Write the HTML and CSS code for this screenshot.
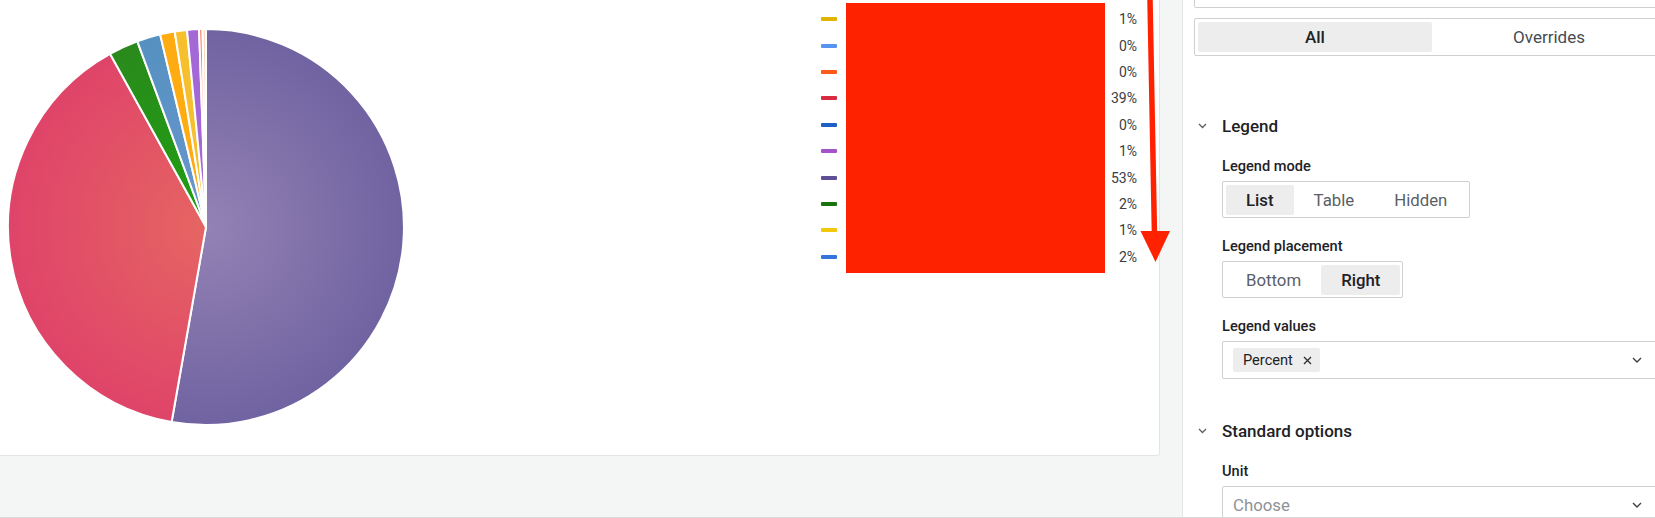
FILE: index.html
```html
<!DOCTYPE html>
<html>
<head>
<meta charset="utf-8">
<link rel="stylesheet" href="styles.css">
</head>
<body>
<div class="screen">
  <div class="main">
    <div class="panel">
      <svg class="pie" viewBox="0 0 420 455" xmlns="http://www.w3.org/2000/svg">
        <defs>
          <radialGradient id="gPurple" gradientUnits="userSpaceOnUse" cx="206" cy="227" r="198">
            <stop offset="0" stop-color="#9382b4"/><stop offset="1" stop-color="#7063a1"/>
          </radialGradient>
          <radialGradient id="gRed" gradientUnits="userSpaceOnUse" cx="206" cy="227" r="198">
            <stop offset="0" stop-color="#e66562"/><stop offset="1" stop-color="#df4469"/>
          </radialGradient>
          <radialGradient id="gGreen" gradientUnits="userSpaceOnUse" cx="206" cy="227" r="198">
            <stop offset="0" stop-color="#1fa011"/><stop offset="1" stop-color="#2a8a1c"/>
          </radialGradient>
          <radialGradient id="gBlue" gradientUnits="userSpaceOnUse" cx="206" cy="227" r="198">
            <stop offset="0" stop-color="#6a96d0"/><stop offset="1" stop-color="#5591c0"/>
          </radialGradient>
        </defs>
        <g stroke="#ffffff" stroke-width="2" stroke-linejoin="round">
          <path fill="url(#gPurple)" d="M206 227 L206 29 A198 198 0 1 1 171.62 422 Z"/>
          <path fill="url(#gRed)" d="M206 227 L171.62 422 A198 198 0 0 1 110.01 53.83 Z"/>
          <path fill="url(#gGreen)" d="M206 227 L110.01 53.83 A198 198 0 0 1 137.31 41.30 Z"/>
          <path fill="url(#gBlue)" d="M206 227 L137.31 41.30 A198 198 0 0 1 160.11 34.39 Z"/>
          <path fill="#ffab12" d="M206 227 L160.11 34.39 A198 198 0 0 1 174.68 31.49 Z"/>
          <path fill="#f5bf2e" d="M206 227 L174.68 31.49 A198 198 0 0 1 187.02 29.91 Z"/>
          <path fill="#a468d6" d="M206 227 L187.02 29.91 A198 198 0 0 1 199.09 29.12 Z"/>
          <path fill="#ff7a64" d="M206 227 L199.09 29.12 A198 198 0 0 1 202.54 29.03 Z"/>
          <path fill="#ffd8c4" d="M206 227 L202.54 29.03 A198 198 0 0 1 206 29 Z"/>
        </g>
      </svg>
      <div class="legend">
        <div class="legend-row"><span class="swatch s1"></span><span class="name"></span><span class="pct">1%</span></div>
        <div class="legend-row"><span class="swatch s2"></span><span class="name"></span><span class="pct">0%</span></div>
        <div class="legend-row"><span class="swatch s3"></span><span class="name"></span><span class="pct">0%</span></div>
        <div class="legend-row"><span class="swatch s4"></span><span class="name"></span><span class="pct">39%</span></div>
        <div class="legend-row"><span class="swatch s5"></span><span class="name"></span><span class="pct">0%</span></div>
        <div class="legend-row"><span class="swatch s6"></span><span class="name"></span><span class="pct">1%</span></div>
        <div class="legend-row"><span class="swatch s7"></span><span class="name"></span><span class="pct">53%</span></div>
        <div class="legend-row"><span class="swatch s8"></span><span class="name"></span><span class="pct">2%</span></div>
        <div class="legend-row"><span class="swatch s9"></span><span class="name"></span><span class="pct">1%</span></div>
        <div class="legend-row"><span class="swatch s10"></span><span class="name"></span><span class="pct">2%</span></div>
        <div class="redact"></div>
      </div>
    </div>
  </div>

  <div class="pane">
    <div class="search"></div>
    <div class="tabs">
      <div class="tab active">All</div>
      <div class="tab">Overrides</div>
    </div>

    <div class="section">
      <div class="section-head">
        <span class="chev"><svg width="9" height="6" viewBox="0 0 9 6"><polyline points="1,1 4.5,4.5 8,1" fill="none" stroke="#5a5d63" stroke-width="1.3"/></svg></span>
        <span class="section-title">Legend</span>
      </div>
      <div class="field">
        <div class="label">Legend mode</div>
        <div class="radio">
          <div class="opt active">List</div>
          <div class="opt">Table</div>
          <div class="opt">Hidden</div>
        </div>
      </div>
      <div class="field">
        <div class="label">Legend placement</div>
        <div class="radio">
          <div class="opt">Bottom</div>
          <div class="opt active">Right</div>
        </div>
      </div>
      <div class="field">
        <div class="label">Legend values</div>
        <div class="select">
          <div class="chip">Percent <svg class="chip-x" width="9" height="9" viewBox="0 0 9 9"><path d="M1 1 L8 8 M8 1 L1 8" stroke="#2f3236" stroke-width="1.4" fill="none"/></svg></div>
          <svg class="sel-chev" width="10" height="6" viewBox="0 0 10 6"><polyline points="1,1 5,5 9,1" fill="none" stroke="#3d4045" stroke-width="1.4"/></svg>
        </div>
      </div>
    </div>

    <div class="section section2">
      <div class="section-head">
        <span class="chev"><svg width="9" height="6" viewBox="0 0 9 6"><polyline points="1,1 4.5,4.5 8,1" fill="none" stroke="#5a5d63" stroke-width="1.3"/></svg></span>
        <span class="section-title">Standard options</span>
      </div>
      <div class="field">
        <div class="label">Unit</div>
        <div class="select">
          <span class="placeholder">Choose</span>
          <svg class="sel-chev" width="10" height="6" viewBox="0 0 10 6"><polyline points="1,1 5,5 9,1" fill="none" stroke="#3d4045" stroke-width="1.4"/></svg>
        </div>
      </div>
    </div>
  </div>

  <svg class="arrow" width="40" height="266" viewBox="0 0 40 266" xmlns="http://www.w3.org/2000/svg">
    <line x1="15" y1="0" x2="19.5" y2="236" stroke="#ff2200" stroke-width="5.5"/>
    <polygon points="5.5,231 35,231 20.5,262" fill="#ff2200"/>
  </svg>
</div>
</body>
</html>
```

FILE: styles.css
```css
html, body {
  margin: 0;
  padding: 0;
}

body {
  font-family: Roboto, "Liberation Sans", Arial, sans-serif;
  background: #f4f5f5;
}

.screen {
  position: relative;
  width: 1655px;
  height: 518px;
  box-sizing: border-box;
  border-bottom: 1px solid #d9dbdb;
  display: flex;
  overflow: hidden;
  background: #f4f5f5;
}

.main {
  width: 1182px;
  flex: none;
}

.panel {
  width: 1160px;
  height: 456px;
  box-sizing: border-box;
  background: #ffffff;
  border-right: 1px solid #e3e5e5;
  border-bottom: 1px solid #e3e5e5;
  border-radius: 0 0 3px 0;
  display: flex;
}

.pie {
  width: 420px;
  height: 455px;
  flex: none;
  display: block;
}

.legend {
  position: relative;
  margin-left: auto;
  margin-right: 22px;
  width: 316px;
  padding-top: 6px;
}

.legend-row {
  display: flex;
  align-items: center;
  height: 26.4px;
}

.swatch {
  width: 16px;
  height: 4px;
  border-radius: 1px;
  flex: none;
}

.s1 { background: #e0b400; }
.s2 { background: #5794f2; }
.s3 { background: #ff5a1a; }
.s4 { background: #d92b3f; }
.s5 { background: #1f60c4; }
.s6 { background: #a352cc; }
.s7 { background: #5f4f96; }
.s8 { background: #19730e; }
.s9 { background: #f2c70c; }
.s10 { background: #3274d9; }

.name {
  flex: 1;
}

.pct {
  font-size: 14px;
  color: #3a3d41;
}

.redact {
  position: absolute;
  left: 25px;
  top: 3px;
  width: 259px;
  height: 270px;
  background: #ff2200;
}

.arrow {
  position: absolute;
  left: 1135px;
  top: 0;
}

/* options pane */
.pane {
  flex: 1;
  min-width: 0;
  background: #ffffff;
  border-left: 1px solid #e4e5e5;
  padding-left: 11px;
  overflow: hidden;
}

.search {
  width: 476px;
  height: 7px;
  box-sizing: content-box;
  border: 1px solid #cfd0d2;
  border-top: 0;
  border-radius: 0 0 2px 2px;
}

.tabs {
  margin-top: 10px;
  width: 476px;
  box-sizing: border-box;
  height: 38px;
  border: 1px solid #cfd0d2;
  border-radius: 2px;
  padding: 3px;
  display: flex;
}

.tab {
  flex: 1;
  height: 30px;
  line-height: 30px;
  text-align: center;
  font-size: 17px;
  color: #464c54;
}

.tab.active {
  background: #ededed;
  color: #202226;
  font-weight: 500;
  border-radius: 2px;
}

.section {
  margin-top: 58px;
}

.section2 {
  margin-top: 40px;
}

.section-head {
  display: flex;
  align-items: center;
  height: 24px;
}

.chev {
  width: 28px;
  flex: none;
  display: flex;
  align-items: center;
  padding-left: 4px;
  box-sizing: border-box;
}

.chev svg {
  display: block;
}

.section-title {
  font-size: 17px;
  font-weight: 500;
  color: #202226;
}

.field {
  margin-left: 28px;
  margin-top: 19px;
}

.label {
  font-size: 14.6px;
  line-height: 18px;
  font-weight: 500;
  color: #202226;
}

.radio {
  margin-top: 6px;
  display: inline-flex;
  height: 37px;
  box-sizing: border-box;
  border: 1px solid #cfd0d2;
  border-radius: 2px;
  padding: 3px 2px 2px 3px;
}

.opt {
  height: 30px;
  line-height: 30px;
  padding: 0 20px;
  font-size: 16.8px;
  color: #5a5f66;
  border-radius: 2px;
}

.opt.active {
  background: #ededed;
  color: #202226;
  font-weight: 500;
}

.select {
  margin-top: 6px;
  width: 440px;
  height: 38px;
  box-sizing: border-box;
  border: 1px solid #cfd0d2;
  border-radius: 2px;
  padding: 0 10px;
  display: flex;
  align-items: center;
  position: relative;
}

.chip {
  height: 24px;
  display: flex;
  align-items: center;
  background: #ededed;
  border-radius: 2px;
  padding: 0 8px 0 10px;
  font-size: 14.6px;
  color: #202226;
}

.chip-x {
  margin-left: 10px;
  display: block;
}

.placeholder {
  font-size: 16.8px;
  color: #8e9297;
}

.sel-chev {
  margin-left: auto;
  margin-right: 9px;
  display: block;
}
```
